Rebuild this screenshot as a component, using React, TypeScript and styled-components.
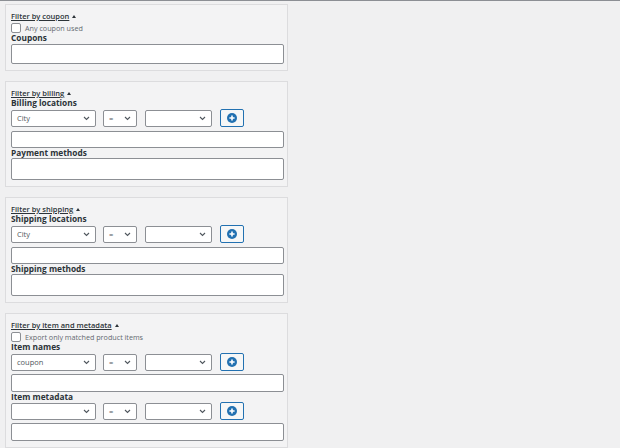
import { ReactElement } from 'react';
import styled, { createGlobalStyle } from 'styled-components';

const GlobalStyle = createGlobalStyle`
  html, body {
    margin: 0;
    padding: 0;
    background: #f0f0f1;
  }
  body {
    font-family: 'Open Sans', 'Noto Sans', sans-serif;
    color: #1d2327;
  }
`;

const Page = styled.div`
  width: 620px;
  height: 448px;
  overflow: hidden;
  border-top: 1px solid #8c8f94;
  box-sizing: border-box;
  padding: 3px 0 0 5px;
  display: flex;
  flex-direction: column;
  gap: 10px;
`;

const Panel = styled.div`
  width: 283px;
  box-sizing: border-box;
  border: 1px solid #dcdcde;
  background: #f3f3f4;
  padding: 6px 3px 6px 5px;
  display: flex;
  flex-direction: column;
  flex-shrink: 0;
`;

const Heading = styled.div`
  height: 10px;
  line-height: 10px;
  font-size: 7.5px;
  font-weight: 600;
  color: #2c3338;
  display: flex;
  align-items: center;
  gap: 3px;
`;

const HeadingText = styled.span`
  text-decoration: underline;
  text-underline-offset: 1px;
`;

const Caret = styled.span`
  width: 0;
  height: 0;
  border-left: 2.5px solid transparent;
  border-right: 2.5px solid transparent;
  border-bottom: 3px solid #2c3338;
  margin-top: 1px;
`;

const CheckRow = styled.label`
  height: 11px;
  margin-top: 1px;
  display: flex;
  align-items: center;
  gap: 4px;
  font-size: 7.2px;
  color: #646970;
`;

const Box = styled.span`
  width: 8px;
  height: 8px;
  border: 1px solid #8c8f94;
  border-radius: 2px;
  background: #fff;
  flex-shrink: 0;
`;

const Label = styled.div`
  height: 10px;
  line-height: 10px;
  font-size: 8.3px;
  font-weight: 700;
  color: #2c3338;
`;

const Field = styled.div<{ $h: number; $mt?: number }>`
  height: ${(p) => p.$h}px;
  margin-top: ${(p) => p.$mt ?? 1}px;
  box-sizing: border-box;
  background: #fff;
  border: 1px solid #8c8f94;
  border-radius: 2px;
`;

const SelectRow = styled.div<{ $mt?: number }>`
  display: flex;
  align-items: center;
  height: 18px;
  margin-top: ${(p) => p.$mt ?? 1}px;
`;

const Select = styled.div<{ $w: number; $ml?: number }>`
  width: ${(p) => p.$w}px;
  margin-left: ${(p) => p.$ml ?? 0}px;
  height: 17px;
  box-sizing: border-box;
  background: #fff;
  border: 1px solid #8c8f94;
  border-radius: 2px;
  display: flex;
  align-items: center;
  justify-content: space-between;
  padding: 0 5px 0 5px;
  font-size: 7.5px;
  color: #50575e;
`;

const AddButton = styled.div`
  width: 24px;
  height: 18px;
  margin-left: 8px;
  box-sizing: border-box;
  border: 1px solid #2271b1;
  border-radius: 2px;
  background: #f6f7f7;
  display: flex;
  align-items: center;
  justify-content: center;
`;

function Chevron(): ReactElement {
  return (
    <svg width="7" height="5" viewBox="0 0 7 5">
      <path d="M1 1 L3.5 3.5 L6 1" fill="none" stroke="#50575e" strokeWidth="1.1" />
    </svg>
  );
}

function PlusIcon(): ReactElement {
  return (
    <svg width="10" height="10" viewBox="0 0 10 10">
      <circle cx="5" cy="5" r="5" fill="#2271b1" />
      <path d="M5 2.4 V7.6 M2.4 5 H7.6" stroke="#fff" strokeWidth="1.6" />
    </svg>
  );
}

function ConditionRow({ first, mt }: { first?: string; mt?: number }): ReactElement {
  return (
    <SelectRow $mt={mt}>
      <Select $w={85}>
        <span>{first}</span>
        <Chevron />
      </Select>
      <Select $w={34} $ml={7}>
        <span>=</span>
        <Chevron />
      </Select>
      <Select $w={67} $ml={8}>
        <span />
        <Chevron />
      </Select>
      <AddButton>
        <PlusIcon />
      </AddButton>
    </SelectRow>
  );
}

function FilterHeading({ title }: { title: string }): ReactElement {
  return (
    <Heading>
      <HeadingText>{title}</HeadingText>
      <Caret />
    </Heading>
  );
}

export default function App(): ReactElement {
  return (
    <>
      <GlobalStyle />
      <Page>
        <Panel>
          <FilterHeading title="Filter by coupon" />
          <CheckRow>
            <Box />
            Any coupon used
          </CheckRow>
          <Label>Coupons</Label>
          <Field $h={20} />
        </Panel>

        <Panel>
          <FilterHeading title="Filter by billing" />
          <Label>Billing locations</Label>
          <ConditionRow first="City" />
          <Field $h={17} $mt={4} />
          <Label>Payment methods</Label>
          <Field $h={22} $mt={0} />
        </Panel>

        <Panel>
          <FilterHeading title="Filter by shipping" />
          <Label>Shipping locations</Label>
          <ConditionRow first="City" />
          <Field $h={17} $mt={4} />
          <Label>Shipping methods</Label>
          <Field $h={22} $mt={0} />
        </Panel>

        <Panel>
          <FilterHeading title="Filter by item and metadata" />
          <CheckRow>
            <Box />
            Export only matched product items
          </CheckRow>
          <Label>Item names</Label>
          <ConditionRow first="coupon" />
          <Field $h={18} $mt={3} />
          <Label>Item metadata</Label>
          <ConditionRow first="" mt={0} />
          <Field $h={18} $mt={3} />
        </Panel>
      </Page>
    </>
  );
}
